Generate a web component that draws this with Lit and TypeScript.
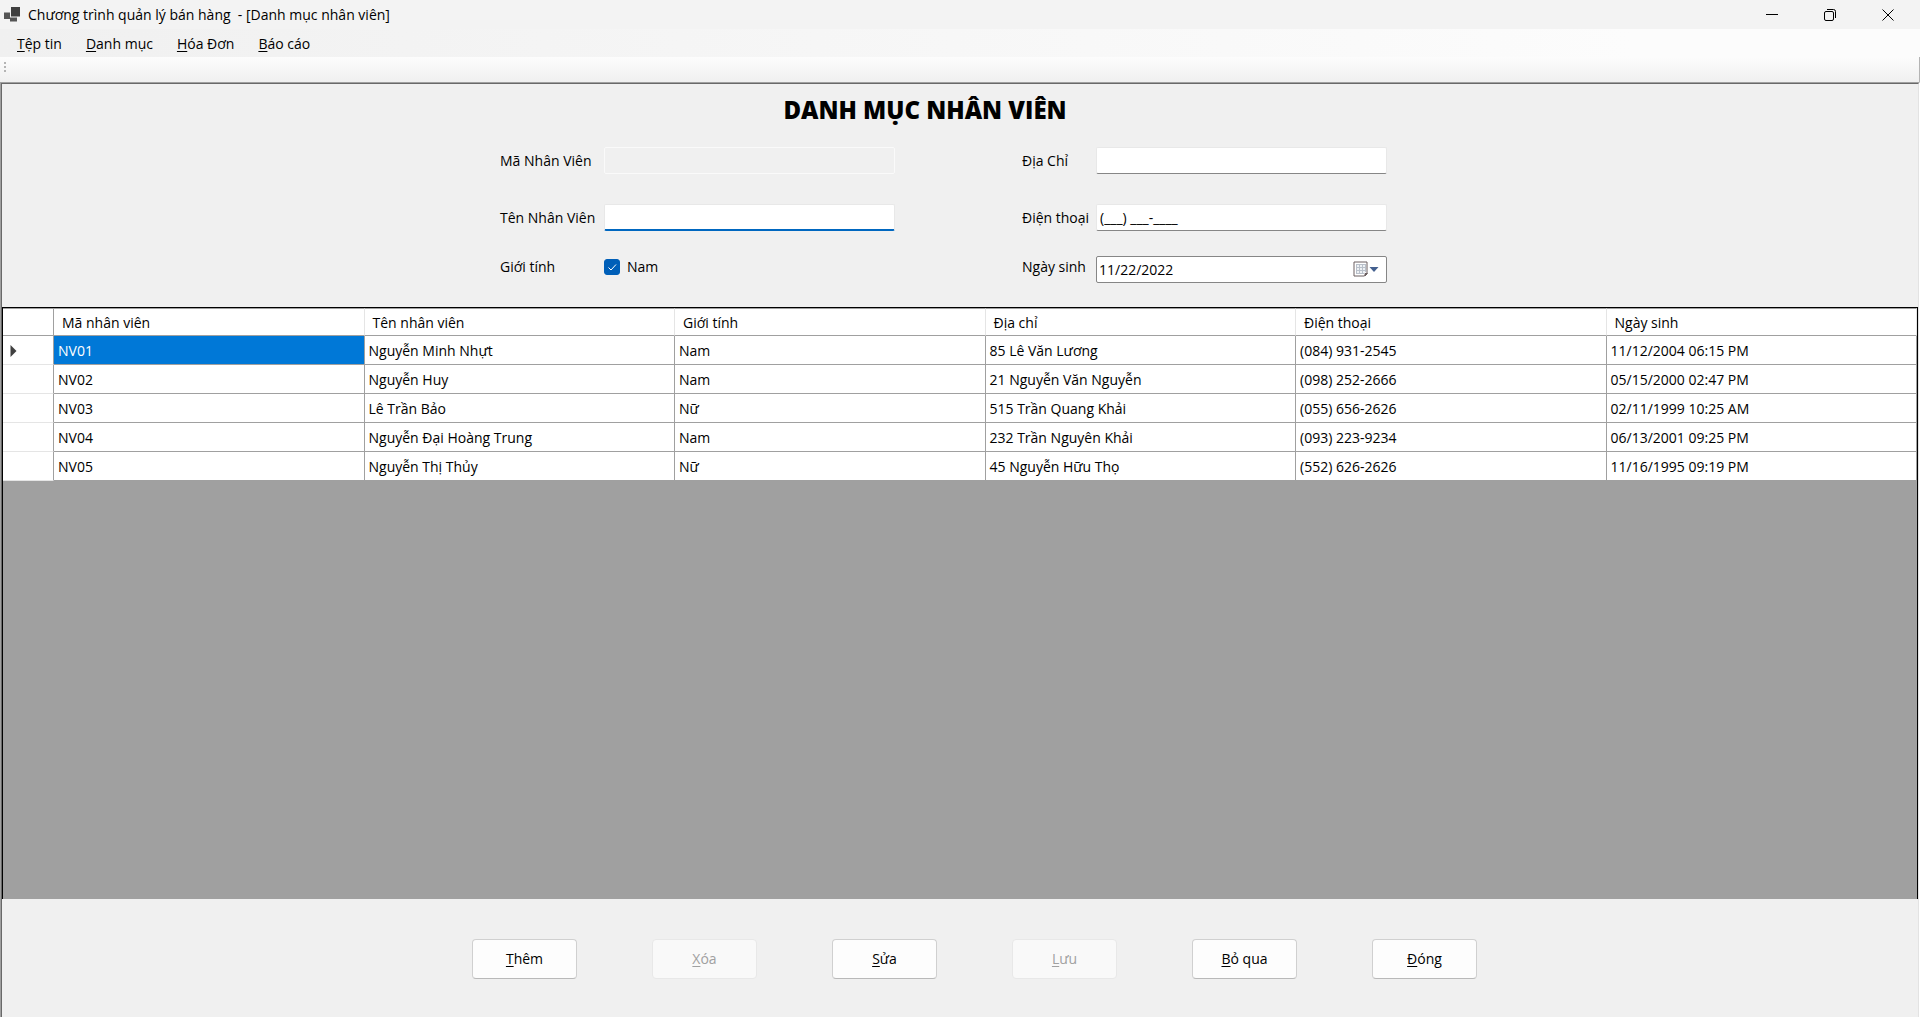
import { LitElement, html, css, svg } from "lit";
import { customElement, property, state } from "lit/decorators.js";
import { classMap } from "lit/directives/class-map.js";

interface Employee {
  id: string;
  name: string;
  gender: string;
  address: string;
  phone: string;
  born: string;
}

const EMPLOYEES: Employee[] = [
  { id: "NV01", name: "Nguyễn Minh Nhựt", gender: "Nam", address: "85 Lê Văn Lương", phone: "(084) 931-2545", born: "11/12/2004 06:15 PM" },
  { id: "NV02", name: "Nguyễn Huy", gender: "Nam", address: "21 Nguyễn Văn Nguyễn", phone: "(098) 252-2666", born: "05/15/2000 02:47 PM" },
  { id: "NV03", name: "Lê Trần Bảo", gender: "Nữ", address: "515 Trần Quang Khải", phone: "(055) 656-2626", born: "02/11/1999 10:25 AM" },
  { id: "NV04", name: "Nguyễn Đại Hoàng Trung", gender: "Nam", address: "232 Trần Nguyên Khải", phone: "(093) 223-9234", born: "06/13/2001 09:25 PM" },
  { id: "NV05", name: "Nguyễn Thị Thủy", gender: "Nữ", address: "45 Nguyễn Hữu Thọ", phone: "(552) 626-2626", born: "11/16/1995 09:19 PM" },
];

const COLUMNS = ["Mã nhân viên", "Tên nhân viên", "Giới tính", "Địa chỉ", "Điện thoại", "Ngày sinh"];

/** Underlines the first letter, the access key of a menu or button. */
const accessKey = (text: string) => html`<span class="key">${text.charAt(0)}</span>${text.slice(1)}`;

@customElement("title-bar")
export class TitleBar extends LitElement {
  static styles = css`
    :host { display: flex; align-items: center; height: 29px; background: #f3f3f3; padding-right: 3px; }
    .icon { width: 18px; height: 18px; margin: 0 6px 2px 4px; flex: none; }
    .caption { flex: 1; white-space: pre; }
    .control {
      width: 58px; height: 29px; padding: 0; border: 0; background: transparent;
      display: flex; align-items: center; justify-content: center;
    }
    .control svg { width: 14px; height: 14px; }
  `;

  render() {
    const lines = (shape: unknown) => html`
      <svg viewBox="0 0 14 14" fill="none" stroke="#000" stroke-width="1">${shape}</svg>`;
    return html`
      <svg class="icon" viewBox="0 0 18 18">
        <rect x="0" y="7.500" width="6" height="6.500" fill="#555" />
        <rect x="7" y="2" width="9" height="9.500" fill="#3f3f3f" />
        <rect x="6" y="12.500" width="7" height="4" fill="#555" />
      </svg>
      <span class="caption">Chương trình quản lý bán hàng  - [Danh mục nhân viên]</span>
      <button class="control" aria-label="Thu nhỏ">${lines(svg`<path d="M1 6.500h12" />`)}</button>
      <button class="control" aria-label="Khôi phục">
        ${lines(svg`<rect x="1.500" y="3.500" width="9" height="9" rx="1.500" />
          <path d="M4 1.500h6.500a2 2 0 0 1 2 2V10" />`)}
      </button>
      <button class="control" aria-label="Đóng cửa sổ">${lines(svg`<path d="M1.500 1.500l11 11M12.500 1.500l-11 11" />`)}</button>
    `;
  }
}

@customElement("menu-bar")
export class MenuBar extends LitElement {
  static styles = css`
    :host { display: block; }
    .menu {
      display: flex; gap: 24px; height: 28px; padding: 2px 0 0 17px; box-sizing: border-box; align-items: center;
      background: linear-gradient(90deg, #f0f0f0, #fcfcfc 85%);
    }
    .item { border: 0; padding: 0; background: transparent; font: inherit; color: inherit; }
    .key { text-decoration: underline; text-underline-offset: 2px; }
    .strip {
      height: 25px; padding: 5px 0 0 4px; box-sizing: border-box;
      display: flex; flex-direction: column; gap: 2px;
      background: linear-gradient(#fcfcfc, #f0f0f0);
      border-right: 1px solid #b4b4b4;
    }
    .dot { width: 2px; height: 2px; background: #b4b4b4; }
  `;

  render() {
    return html`
      <nav class="menu">
        ${["Tệp tin", "Danh mục", "Hóa Đơn", "Báo cáo"].map(
          (name) => html`<button class="item">${accessKey(name)}</button>`
        )}
      </nav>
      <div class="strip"><i class="dot"></i><i class="dot"></i><i class="dot"></i></div>
    `;
  }
}

@customElement("employee-form")
export class EmployeeForm extends LitElement {
  static styles = css`
    :host { display: block; height: 223px; }
    .title {
      margin: 0; padding: 8px 70px 0 0; text-align: center;
      font: 800 24px/36px "Open Sans", "Noto Sans", sans-serif;
    }
    .fields {
      display: grid; justify-content: center; align-items: start;
      grid-template-columns: 104px 291px 127px 74px 291px;
      grid-template-rows: 57px 52px 27px;
      padding: 19px 33px 0 0;
    }
    .label { line-height: 27px; white-space: nowrap; }
    .label.short, .check { line-height: 22px; }
    .right { grid-column: 4; }
    .box {
      box-sizing: border-box; width: 100%; height: 27px; margin: 0; padding: 0 3px;
      border: 1px solid #e8e8e8; border-bottom-color: #868686; border-radius: 2px;
      background: #fff; font: inherit; color: #000; outline: none;
    }
    .box:disabled { background: #f0f0f0; border-color: #fafafa; }
    .box.active { border-bottom: 2px solid #0067c0; }
    .date {
      display: flex; align-items: center; box-sizing: border-box; height: 27px;
      border: 1px solid #868686; border-radius: 2px; background: #fff; padding-right: 7px;
    }
    .date-text {
      flex: 1; min-width: 0; border: 0; padding: 0 2px; background: transparent;
      font: inherit; color: #000; outline: none;
    }
    .picker { border: 0; padding: 0; background: transparent; display: flex; }
    .check { display: flex; align-items: center; gap: 7px; }
    .mark { display: grid; width: 16px; height: 16px; }
    .tick { grid-area: 1 / 1; appearance: none; width: 16px; height: 16px; margin: 0;
      border: 1px solid #868686; border-radius: 3px; background: #fff; }
    .tick:checked { background: #005fb8; border-color: #005fb8; }
    .glyph { grid-area: 1 / 1; width: 16px; height: 16px; pointer-events: none; }
  `;

  render() {
    return html`
      <h1 class="title">DANH MỤC NHÂN VIÊN</h1>
      <div class="fields">
        <label class="label" for="code">Mã Nhân Viên</label>
        <input class="box" id="code" disabled />
        <label class="label right" for="address">Địa Chỉ</label>
        <input class="box" id="address" />

        <label class="label" for="name">Tên Nhân Viên</label>
        <input class="box active" id="name" />
        <label class="label right" for="phone">Điện thoại</label>
        <input class="box" id="phone" .value=${"(___) ___-____"} />

        <label class="label short" for="male">Giới tính</label>
        <label class="check">
          <span class="mark">
            <input class="tick" id="male" type="checkbox" checked />
            <svg class="glyph" viewBox="0 0 16 16" fill="none" stroke="#fff">
              <path d="M4.500 8.500l2.500 2.500 5-5.500" />
            </svg>
          </span>
          Nam
        </label>
        <label class="label short right" for="born">Ngày sinh</label>
        <div class="date">
          <input class="date-text" id="born" .value=${"11/22/2022"} />
          <button class="picker" aria-label="Chọn ngày">
            <svg width="26" height="17" viewBox="0 0 26 17" fill="none">
              <path d="M1 1h13v11l-2.500 3H1z" fill="#fff" stroke="#6b5f60" />
              <path d="M3 3h9.500v9.500H3z" fill="#eef1f4" />
              <path d="M3 3.500h10M3 6.500h10M3 9.500h10M3 12.500h8M3.500 3v10M6.500 3v10M9.500 3v10M12.500 3v8" stroke="#b9c0ca" />
              <path d="M14.500 12.500h-2.500v2.500z" fill="#6b5f60" stroke="#6b5f60" />
              <path d="M16.500 6h9l-4.500 5z" fill="#44608f" />
            </svg>
          </button>
        </div>
      </div>
    `;
  }
}

@customElement("employee-table")
export class EmployeeTable extends LitElement {
  @property({ attribute: false }) rows: Employee[] = [];
  @state() private current = 0;

  static styles = css`
    :host {
      display: block; flex: 1; background: #a0a0a0;
      border: 1px solid #000; border-bottom: 0;
    }
    .grid { width: 100%; table-layout: fixed; border-collapse: separate; border-spacing: 0; background: #fff; }
    .grid th, .grid td {
      box-sizing: border-box; text-align: left; font-weight: 400; white-space: nowrap; overflow: hidden;
      border-right: 1px solid #a0a0a0; border-bottom: 1px solid #a0a0a0;
    }
    .grid td { height: 29px; padding: 2px 4px 0; }
    .grid .head { height: 28px; padding: 2px 8px 0; border-top: 1px solid #a0a0a0; border-right-color: #e5e5e5; }
    .grid .corner { width: 51px; border-right-color: #a0a0a0; }
    .grid .marker { padding: 2px 0 0 7px; border-bottom-color: #e5e5e5; }
    .grid .selected { background: #0078d7; color: #fff; }
    .arrow { display: block; width: 7px; height: 12px; }
  `;

  render() {
    return html`
      <table class="grid">
        <thead>
          <tr>
            <th class="head corner"></th>
            ${COLUMNS.map((name) => html`<th class="head">${name}</th>`)}
          </tr>
        </thead>
        <tbody>
          ${this.rows.map(
            (row, i) => html`
              <tr @click=${() => (this.current = i)}>
                <th class="marker">
                  ${i === this.current
                    ? html`<svg class="arrow" viewBox="0 0 7 12"><path d="M0.500 0l6 6-6 6z" fill="#404040" /></svg>`
                    : ""}
                </th>
                <td class=${classMap({ selected: i === this.current })}>${row.id}</td>
                <td>${row.name}</td>
                <td>${row.gender}</td>
                <td>${row.address}</td>
                <td>${row.phone}</td>
                <td>${row.born}</td>
              </tr>
            `
          )}
        </tbody>
      </table>
    `;
  }
}

@customElement("action-bar")
export class ActionBar extends LitElement {
  static styles = css`
    :host {
      display: flex; justify-content: center; align-items: center; gap: 75px;
      height: 118px; box-sizing: border-box; padding: 2px 0 0 29px;
    }
    .action {
      width: 105px; height: 40px; padding: 0; font: inherit; color: #000; background: #fdfdfd;
      border: 1px solid #d0d0d0; border-bottom-color: #b9b9b9; border-radius: 4px;
    }
    .action:disabled { color: #a0a0a0; background: #f9f9f9; border-color: #e8e8e8; }
    .key { text-decoration: underline; text-underline-offset: 2px; }
  `;

  render() {
    const actions: [string, boolean][] = [
      ["Thêm", true], ["Xóa", false], ["Sửa", true], ["Lưu", false], ["Bỏ qua", true], ["Đóng", true],
    ];
    return actions.map(
      ([name, enabled]) => html`<button class="action" ?disabled=${!enabled}>${accessKey(name)}</button>`
    );
  }
}

@customElement("app-root")
export class AppRoot extends LitElement {
  static styles = css`
    :host {
      display: flex; flex-direction: column; min-height: 100vh; background: #f0f0f0; color: #000;
      font: 14px/20px "Open Sans", "Noto Sans", sans-serif;
    }
    .client { flex: 1; display: flex; border: solid; border-width: 1px 1px 0 1px; border-color: #a0a0a0 #fff #fff #a0a0a0; }
    .sunken {
      flex: 1; min-width: 0; display: flex; flex-direction: column;
      border: solid; border-width: 1px 1px 0 1px; border-color: #696969 #e3e3e3 #e3e3e3 #696969;
    }
  `;

  render() {
    return html`
      <title-bar></title-bar>
      <menu-bar></menu-bar>
      <main class="client">
        <div class="sunken">
          <employee-form></employee-form>
          <employee-table .rows=${EMPLOYEES}></employee-table>
          <action-bar></action-bar>
        </div>
      </main>
    `;
  }
}
